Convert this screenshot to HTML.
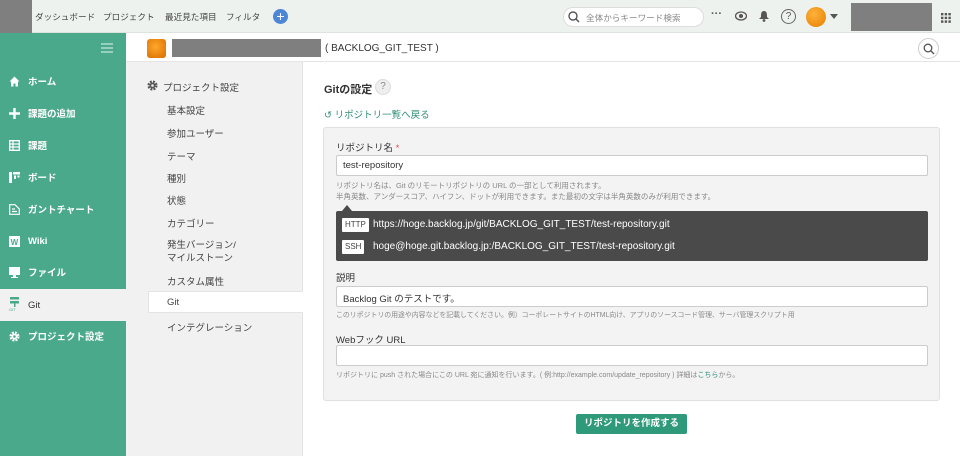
<!DOCTYPE html>
<html><head><meta charset="utf-8"><style>
*{box-sizing:border-box;margin:0;padding:0}
body{width:960px;height:456px;overflow:hidden;font-family:"Liberation Sans","Noto Sans CJK JP",sans-serif;background:#fff;position:relative;color:#333}
.a{position:absolute}
.top{left:0;top:0;width:960px;height:33px;background:#eef2ef;border-bottom:1px solid #dde2df}
.gray{background:#7f7f7f}
.nav{font-size:8.6px;color:#444;top:11px;white-space:nowrap}
.side{left:0;top:33px;width:126px;height:423px;background:#4aa98b}
.si{left:0;width:126px;height:32px;color:#fff;font-size:9.5px;font-weight:bold;display:flex;align-items:center;padding-left:28px}
.ic{position:absolute;left:9px;width:11px;height:11px}
.sub{left:126px;top:62px;width:177px;height:394px;background:#f1f1f1;border-right:1px solid #e2e2e2}
.sn{font-size:9.5px;color:#444;left:167px}
.lbl{font-size:9.5px;color:#333;left:336px}
.inp{left:336px;width:592px;height:21px;background:#fff;border:1px solid #ccc;border-radius:2px;font-size:9.5px;padding:4px 6px;color:#333}
.help{left:336px;font-size:7.5px;color:#888;line-height:11px;white-space:nowrap}
.badge{left:342px;height:14px;background:#fff;color:#444;font-size:8px;padding:2px 3px;border-radius:1px}
.url{left:373px;color:#fff;font-size:10px}
</style></head><body>
<div class="a top"></div>
<div class="a gray" style="left:0;top:0;width:32px;height:33px"></div>
<div class="a nav" style="left:35px">ダッシュボード</div>
<div class="a nav" style="left:103px">プロジェクト</div>
<div class="a nav" style="left:165px">最近見た項目</div>
<div class="a nav" style="left:226px">フィルタ</div>
<div class="a" style="left:273px;top:9px;width:15px;height:15px;border-radius:50%;background:#4c86d6;color:#fff;font-size:14px;line-height:14px;text-align:center">+</div>
<div class="a" style="left:563px;top:7px;width:141px;height:20px;border-radius:10px;background:#fff;border:1px solid #ddd;font-size:8.6px;color:#888;padding:4px 0 0 22px;white-space:nowrap">全体からキーワード検索</div>
<svg class="a" style="left:568px;top:11px" width="12" height="12"><circle cx="5" cy="5" r="4" fill="none" stroke="#555" stroke-width="1.4"/><line x1="8" y1="8" x2="11" y2="11" stroke="#555" stroke-width="1.5"/></svg>
<div class="a" style="left:711px;top:8px;font-size:11px;color:#555;font-weight:bold">···</div>
<svg class="a" style="left:735px;top:11px" width="12" height="10"><ellipse cx="6" cy="5" rx="5.5" ry="4" fill="none" stroke="#555" stroke-width="1.3"/><circle cx="6" cy="5" r="2" fill="#555"/></svg>
<svg class="a" style="left:758px;top:10px" width="12" height="12"><path d="M6 1C3 1 3 4 3 7L1 9H11L9 7C9 4 9 1 6 1Z" fill="#555"/><circle cx="6" cy="10.5" r="1.4" fill="#555"/></svg>
<div class="a" style="left:781px;top:9px;width:15px;height:15px;border:1.3px solid #666;border-radius:50%;font-size:10px;color:#555;text-align:center;line-height:13px">?</div>
<div class="a" style="left:806px;top:7px;width:20px;height:20px;border-radius:50%;background:radial-gradient(circle at 40% 35%,#ffb13a,#e47f00)"></div>
<div class="a" style="left:830px;top:14px;border:4px solid transparent;border-top:5px solid #555"></div>
<div class="a gray" style="left:851px;top:3px;width:81px;height:28px"></div>
<svg class="a" style="left:941px;top:13px" width="10" height="10" fill="#555"><rect x="0" y="0" width="2.4" height="2.4"/><rect x="3.7" y="0" width="2.4" height="2.4"/><rect x="7.4" y="0" width="2.4" height="2.4"/><rect x="0" y="3.7" width="2.4" height="2.4"/><rect x="3.7" y="3.7" width="2.4" height="2.4"/><rect x="7.4" y="3.7" width="2.4" height="2.4"/><rect x="0" y="7.4" width="2.4" height="2.4"/><rect x="3.7" y="7.4" width="2.4" height="2.4"/><rect x="7.4" y="7.4" width="2.4" height="2.4"/></svg>

<div class="a side"></div>
<svg class="a" style="left:101px;top:43px" width="12" height="10" stroke="#cfe9df" stroke-width="1.2"><line x1="0" y1="1" x2="12" y2="1"/><line x1="0" y1="5" x2="12" y2="5"/><line x1="0" y1="9" x2="12" y2="9"/></svg>
<div class="a" style="left:126px;top:33px;width:834px;height:29px;background:#fff;border-bottom:1px solid #e5e5e5"></div>
<div class="a" style="left:147px;top:39px;width:19px;height:19px;border-radius:3px;background:radial-gradient(circle at 45% 40%,#ffa82a,#d86c00)"></div>
<div class="a gray" style="left:172px;top:39px;width:149px;height:18px"></div>
<div class="a" style="left:325px;top:43px;font-size:10px;color:#333">( BACKLOG_GIT_TEST )</div>
<div class="a" style="left:918px;top:38px;width:21px;height:21px;border-radius:50%;border:1px solid #ccc;background:#fff"></div>
<svg class="a" style="left:923px;top:43px" width="12" height="12"><circle cx="5" cy="5" r="3.8" fill="none" stroke="#555" stroke-width="1.3"/><line x1="7.8" y1="7.8" x2="11" y2="11" stroke="#555" stroke-width="1.4"/></svg>

<div class="a si" style="top:65px"><svg class="ic" viewBox="0 0 11 11"><path d="M5.5 0.5L0.5 5.5H2V10.5H4.5V7.5H6.5V10.5H9V5.5H10.5Z" fill="#fff"/></svg>ホーム</div>
<div class="a si" style="top:97px"><svg class="ic" viewBox="0 0 11 11"><path d="M4.3 0H6.7V4.3H11V6.7H6.7V11H4.3V6.7H0V4.3H4.3Z" fill="#fff"/></svg>課題の追加</div>
<div class="a si" style="top:129px"><svg class="ic" viewBox="0 0 11 11"><rect x="0.7" y="0.7" width="9.6" height="9.6" fill="none" stroke="#fff" stroke-width="1.4"/><path d="M0.7 4H10.3M0.7 7H10.3M4 0.7V10.3" stroke="#fff" stroke-width="1.2"/></svg>課題</div>
<div class="a si" style="top:161px"><svg class="ic" viewBox="0 0 11 11"><path d="M0 0H3V11H0ZM4 0H11V2.5H4ZM5 3.5H7V7H5ZM8.5 3.5H10.5V5.5H8.5Z" fill="#fff"/></svg>ボード</div>
<div class="a si" style="top:193px"><svg class="ic" viewBox="0 0 11 11"><path d="M0.7 0.7H6L10.3 5V10.3H0.7Z M3 5H6 M3 7.5H8" fill="none" stroke="#fff" stroke-width="1.2"/></svg>ガントチャート</div>
<div class="a si" style="top:225px"><svg class="ic" viewBox="0 0 11 11"><rect x="0" y="0" width="11" height="11" fill="#fff"/><text x="1.6" y="9" font-size="8" font-weight="bold" fill="#4aa98b" font-family="Liberation Sans">W</text></svg>Wiki</div>
<div class="a si" style="top:256px"><svg class="ic" viewBox="0 0 11 11"><path d="M0 0H11V8H0ZM4 8H7V10H9V11H2V10H4Z" fill="#fff"/></svg>ファイル</div>
<div class="a si" style="top:289px;background:#f1f1f1;color:#333;font-weight:normal"><svg class="ic" style="top:8px;height:14px" viewBox="0 0 11 14"><rect x="1" y="0" width="9" height="2.5" fill="#4aa98b"/><rect x="1" y="4" width="9" height="2.5" fill="#4aa98b"/><rect x="5" y="6" width="1.5" height="4" fill="#4aa98b"/><text x="0" y="14" font-size="4" fill="#4aa98b">GIT</text></svg>Git</div>
<div class="a si" style="top:320px"><svg class="ic" viewBox="0 0 12 12"><circle cx="6" cy="6" r="4" fill="none" stroke="#fff" stroke-width="3" stroke-dasharray="2 1.2"/><circle cx="6" cy="6" r="3.2" fill="#fff"/><circle cx="6" cy="6" r="1.4" fill="#4aa98b"/></svg>プロジェクト設定</div>

<div class="a sub"></div>
<svg class="a" style="left:147px;top:80px" width="11" height="11" viewBox="0 0 12 12"><circle cx="6" cy="6" r="4" fill="none" stroke="#555" stroke-width="3" stroke-dasharray="2 1.2"/><circle cx="6" cy="6" r="3.2" fill="#555"/><circle cx="6" cy="6" r="1.4" fill="#f1f1f1"/></svg>
<div class="a sn" style="left:163px;top:80px">プロジェクト設定</div>
<div class="a sn" style="top:103px">基本設定</div>
<div class="a sn" style="top:126px">参加ユーザー</div>
<div class="a sn" style="top:149px">テーマ</div>
<div class="a sn" style="top:171px">種別</div>
<div class="a sn" style="top:193px">状態</div>
<div class="a sn" style="top:216px">カテゴリー</div>
<div class="a sn" style="top:239px;line-height:13px">発生バージョン/<br>マイルストーン</div>
<div class="a sn" style="top:274px">カスタム属性</div>
<div class="a" style="left:148px;top:291px;width:155px;height:22px;background:#fff;border:1px solid #e4e4e4;border-right:none"></div>
<div class="a sn" style="top:297px">Git</div>
<div class="a sn" style="top:320px">インテグレーション</div>

<div class="a" style="left:324px;top:81px;font-size:11px;font-weight:bold;color:#333">Gitの設定</div>
<div class="a" style="left:375px;top:79px;width:16px;height:16px;border-radius:50%;background:#eee;border:1px solid #ddd;font-size:10px;color:#888;text-align:center;line-height:14px">?</div>
<div class="a" style="left:324px;top:107px;font-size:9.5px;color:#2f8f78">↺ リポジトリ一覧へ戻る</div>

<div class="a" style="left:323px;top:127px;width:617px;height:274px;background:#f3f3f3;border:1px solid #e0e0e0;border-radius:3px"></div>
<div class="a lbl" style="top:140px">リポジトリ名 <span style="color:#e05050">*</span></div>
<div class="a inp" style="top:155px">test-repository</div>
<div class="a help" style="top:180px">リポジトリ名は、Git のリモートリポジトリの URL の一部として利用されます。<br>半角英数、アンダースコア、ハイフン、ドットが利用できます。また最初の文字は半角英数のみが利用できます。</div>
<div class="a" style="left:336px;top:211px;width:592px;height:50px;background:#4a4a4a;border-radius:2px"></div>
<div class="a" style="left:342px;top:205px;border:5px solid transparent;border-bottom:6px solid #4a4a4a;border-top:none"></div>
<div class="a badge" style="top:218px">HTTP</div>
<div class="a url" style="top:219px">https://hoge.backlog.jp/git/BACKLOG_GIT_TEST/test-repository.git</div>
<div class="a badge" style="top:240px">SSH</div>
<div class="a url" style="top:241px">hoge@hoge.git.backlog.jp:/BACKLOG_GIT_TEST/test-repository.git</div>
<div class="a lbl" style="top:270px">説明</div>
<div class="a inp" style="top:286px">Backlog Git のテストです。</div>
<div class="a help" style="top:310px;font-size:6.9px">このリポジトリの用途や内容などを記載してください。例）コーポレートサイトのHTML向け、アプリのソースコード管理、サーバ管理スクリプト用</div>
<div class="a lbl" style="top:332px">Webフック URL</div>
<div class="a inp" style="top:345px"></div>
<div class="a help" style="top:370px;font-size:7px">リポジトリに push された場合にこの URL 宛に通知を行います。( 例:http://example.com/update_repository ) 詳細は<span style="color:#2f8f78">こちら</span>から。</div>
<div class="a" style="left:576px;top:414px;width:111px;height:20px;background:#2e9a7a;border-radius:2px;color:#fff;font-size:9.5px;font-weight:bold;text-align:center;line-height:20px">リポジトリを作成する</div>
</body></html>
